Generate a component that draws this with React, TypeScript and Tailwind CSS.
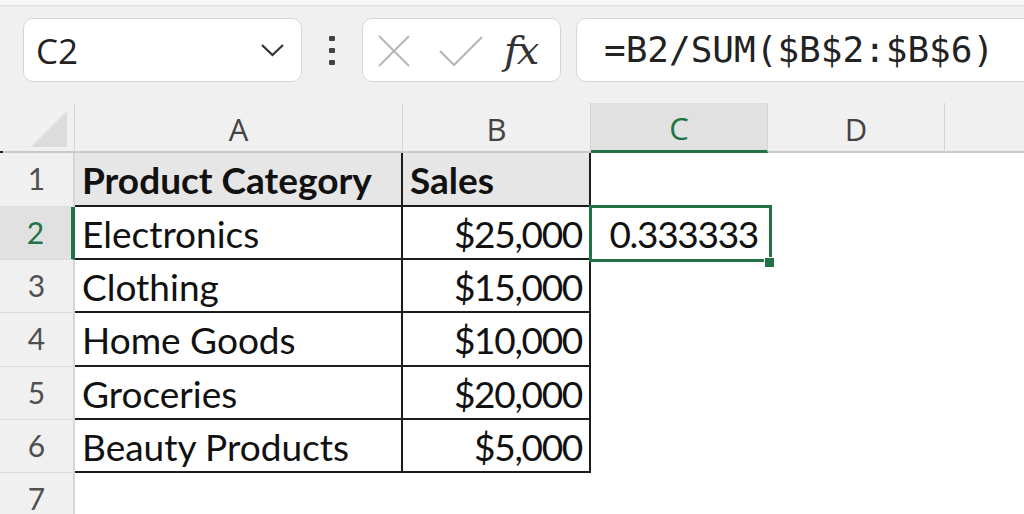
import type { ReactNode } from 'react';

interface Row {
  n: number;
  h: string;
  a?: string;
  b?: string;
  c?: string;
  head?: boolean;
}

const ROWS: Row[] = [
  { n: 1, h: 'h-[54px]', a: 'Product Category', b: 'Sales', head: true },
  { n: 2, h: 'h-[53px]', a: 'Electronics', b: '$25,000', c: '0.333333' },
  { n: 3, h: 'h-[53px]', a: 'Clothing', b: '$15,000' },
  { n: 4, h: 'h-[54px]', a: 'Home Goods', b: '$10,000' },
  { n: 5, h: 'h-[53px]', a: 'Groceries', b: '$20,000' },
  { n: 6, h: 'h-[53px]', a: 'Beauty Products', b: '$5,000' },
  { n: 7, h: 'h-[53px]' },
];

function ColHead({ label, width, active }: { label: string; width: string; active?: boolean }) {
  return (
    <div
      className={`${width} shrink-0 h-full flex items-center justify-center pt-[4px] text-[31px] border-r border-r-[#d4d4d4] border-b-2 ${
        active ? 'bg-[#e1e1e1] text-[#217346] border-b-[#217346] border-b-[3px]' : 'text-[#444] border-b-[#c9c9c9]'
      }`}
    >
      {label}
    </div>
  );
}

function RowHead({ n, selected }: { n: number; selected?: boolean }) {
  return (
    <div
      className={`w-[75px] shrink-0 h-full flex justify-center pt-[10px] text-[30px] leading-[30px] border-b border-b-[#dcdcdc] ${
        selected
          ? 'bg-[#e1e1e1] text-[#217346] border-r-[4px] border-r-[#217346]'
          : 'text-[#505050] border-r-2 border-r-[#d6d6d6]'
      }`}
    >
      {n}
    </div>
  );
}

function Cell({ children, className = '' }: { children?: ReactNode; className?: string }) {
  return (
    <div className={`h-full shrink-0 pt-[8px] text-[37px] leading-[37px] text-[#111] whitespace-nowrap overflow-hidden ${className}`}>
      {children}
    </div>
  );
}

export default function App() {
  return (
    <div className="w-[1024px] h-[514px] overflow-hidden bg-[#f0f0f0] font-['Open_Sans',sans-serif]">
      <div className="h-[5px] bg-[#f7f7f7] shadow-[0_1px_2px_rgba(0,0,0,0.08)]" />

      {/* name box + formula bar */}
      <div className="mt-[13px] h-[64px] flex items-center">
        <div className="ml-[23px] w-[279px] h-full shrink-0 rounded-[10px] bg-white border border-[#d6d6d6] flex items-center justify-between pl-[12px] pr-[16px]">
          <span className="text-[35px] text-[#222] leading-none">C2</span>
          <svg width="25" height="14" viewBox="0 0 25 14" fill="none">
            <polyline points="2,2 12.5,12 23,2" stroke="#333" strokeWidth="2.2" />
          </svg>
        </div>

        <div className="ml-[27px] shrink-0 flex flex-col gap-[7px]">
          <span className="w-[6px] h-[5px] bg-[#444] rounded-[1px]" />
          <span className="w-[6px] h-[5px] bg-[#444] rounded-[1px]" />
          <span className="w-[6px] h-[5px] bg-[#444] rounded-[1px]" />
        </div>

        <div className="ml-[27px] w-[199px] h-full shrink-0 rounded-[10px] bg-white border border-[#d6d6d6] flex items-center pl-[14px]">
          <svg width="34" height="34" viewBox="0 0 34 34" fill="none" className="mt-[2px]">
            <line x1="2" y1="2" x2="32" y2="32" stroke="#b5b5b5" strokeWidth="2" />
            <line x1="32" y1="2" x2="2" y2="32" stroke="#b5b5b5" strokeWidth="2" />
          </svg>
          <svg width="46" height="32" viewBox="0 0 46 32" fill="none" className="ml-[27px] mt-[2px]">
            <polyline points="2,16 16,30 44,2" stroke="#b5b5b5" strokeWidth="2" />
          </svg>
          <span className="ml-[20px] italic font-['DejaVu_Serif',serif] text-[40px] leading-none text-[#333] tracking-[-2px]">
            fx
          </span>
        </div>

        <div className="ml-[15px] w-[480px] h-full shrink-0 rounded-l-[10px] bg-white border border-[#d6d6d6] flex items-center pl-[27px]">
          <span className="font-['DejaVu_Sans_Mono',monospace] text-[36px] leading-none text-[#222]">
            =B2/SUM($B$2:$B$6)
          </span>
        </div>
      </div>

      {/* sheet */}
      <div className="mt-[21px]">
        <div className="h-[50px] flex">
          <div className="relative w-[75px] shrink-0 h-full border-r border-r-[#d4d4d4] border-b-2 border-b-[#c9c9c9] flex items-end justify-end pr-[7px] pb-[4px]">
            <svg width="36" height="36" viewBox="0 0 36 36">
              <polygon points="36,0 36,36 0,36" fill="#dcdcdc" />
            </svg>
            <span className="absolute left-0 bottom-[-2px] w-[3px] h-[2px] bg-[#222]" />
          </div>
          <ColHead label="A" width="w-[328px]" />
          <ColHead label="B" width="w-[188px]" />
          <ColHead label="C" width="w-[177px]" active />
          <ColHead label="D" width="w-[177px]" />
          <div className="flex-1 h-full border-b-2 border-b-[#c9c9c9]" />
        </div>

        {ROWS.map((r) => {
          const boxed = r.n <= 6;
          const border = boxed ? 'border-r-2 border-b-2 border-[#1c1c1c]' : '';
          const fill = r.head ? 'bg-[#e7e6e6] font-bold' : 'bg-white';
          return (
            <div key={r.n} className={`${r.h} flex font-['Lato',sans-serif]`}>
              <RowHead n={r.n} selected={r.n === 2} />
              <Cell className={`w-[328px] pl-[7px] ${boxed ? fill : 'bg-white'} ${border}`}>{r.a}</Cell>
              <Cell
                className={`w-[188px] ${r.head ? 'pl-[7px]' : 'text-right pr-[7px] tracking-[-1.3px]'} ${boxed ? fill : 'bg-white'} ${border}`}
              >
                {r.b}
              </Cell>
              <div className="relative w-[177px] shrink-0 h-full bg-white">
                {r.c && (
                  <>
                    <div className="h-full pt-[8px] pr-[10px] text-right text-[37px] leading-[37px] tracking-[-1.3px] text-[#111]">
                      {r.c}
                    </div>
                    <div className="absolute z-10 left-[-2px] top-[-2px] w-[183px] h-[57px] border-[3px] border-[#217346]" />
                    <div className="absolute z-20 right-[-7px] bottom-[-8px] w-[11px] h-[11px] border border-white bg-[#217346]" />
                  </>
                )}
              </div>
              <div className="flex-1 h-full bg-white" />
            </div>
          );
        })}
      </div>
    </div>
  );
}
